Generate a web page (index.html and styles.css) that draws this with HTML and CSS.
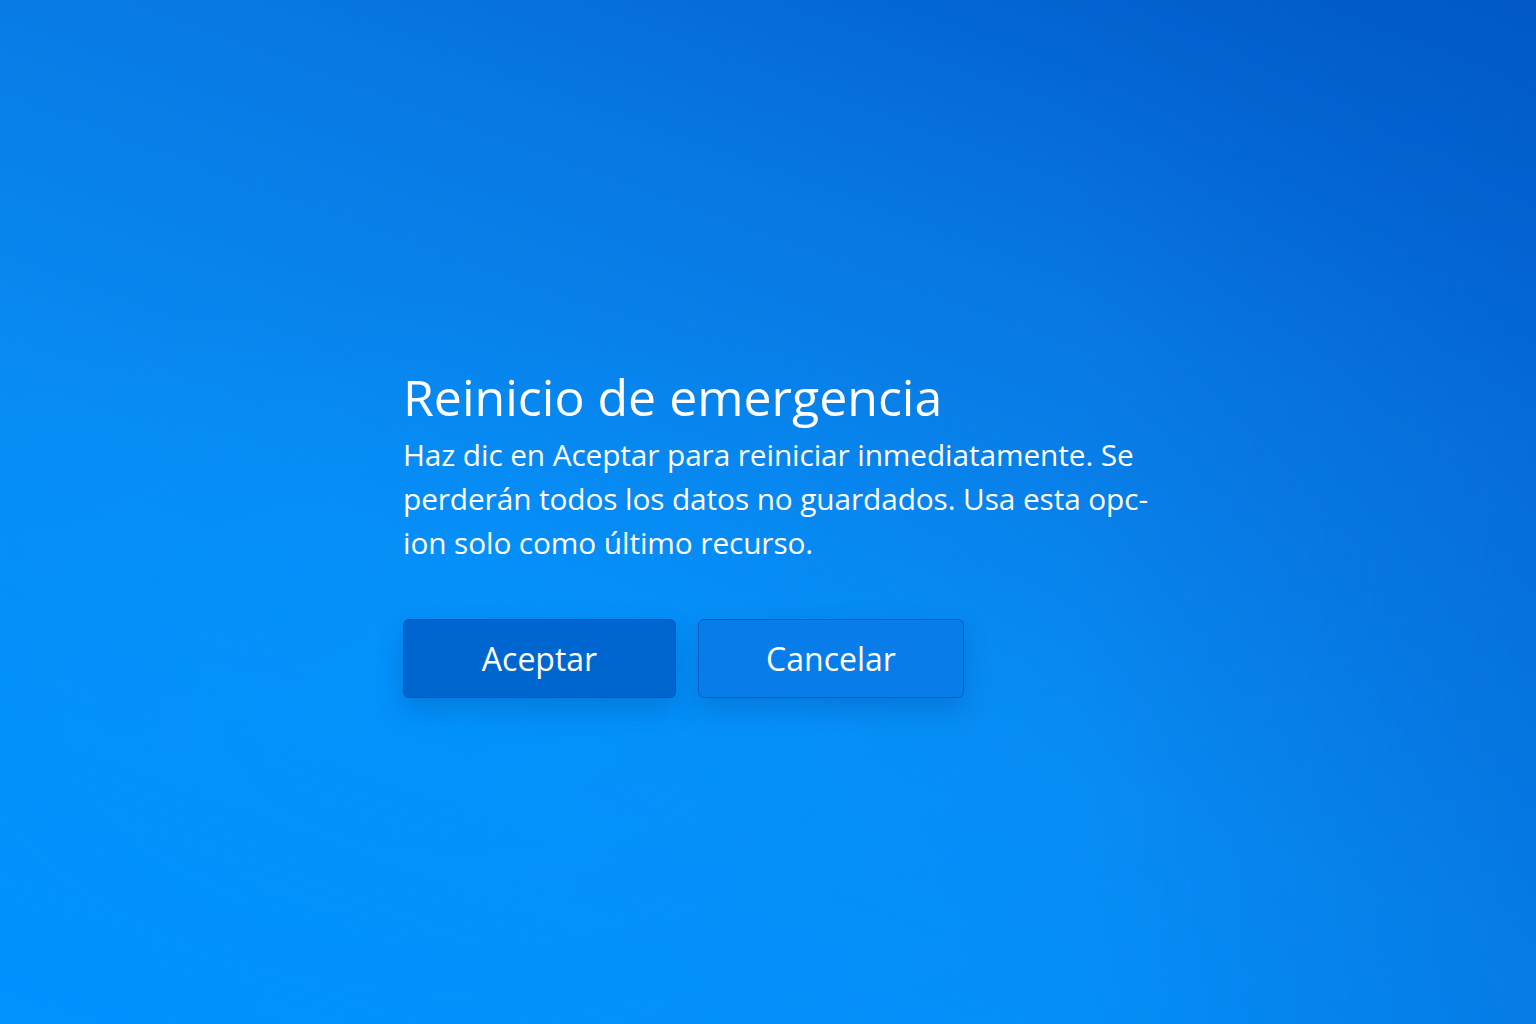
FILE: index.html
```html
<!DOCTYPE html>
<html lang="es">
<head>
<meta charset="UTF-8">
<meta name="viewport" content="width=device-width, initial-scale=1.0">
<title>Reinicio de emergencia</title>
<link rel="stylesheet" href="styles.css">
</head>
<body>
<main class="dialog">
  <h1 class="title">Reinicio de emergencia</h1>
  <p class="message">Haz dic en Aceptar para reiniciar inmediatamente. Se<br>perderán todos los datos no guardados. Usa esta opc-<br>ion solo como último recurso.</p>
  <div class="actions">
    <button class="btn btn-primary">Aceptar</button>
    <button class="btn btn-secondary">Cancelar</button>
  </div>
</main>
</body>
</html>
```

FILE: styles.css
```css
html, body {
  height: 100%;
  margin: 0;
  padding: 0;
}
body {
  font-family: "Open Sans", "Noto Sans", sans-serif;
  color: #ffffff;
  background:
    linear-gradient(90deg, rgba(0, 80, 190, 0) 70%, rgba(0, 90, 200, 0.35) 100%),
    radial-gradient(ellipse 70% 60% at 30% 70%, rgba(0, 150, 255, 0.55), rgba(0, 150, 255, 0) 70%),
    linear-gradient(200deg, #0058c6 0%, #0878e2 30%, #088cf4 60%, #0092ff 100%);
  overflow: hidden;
}
.dialog {
  padding: 365px 0 0 403px;
}
.title {
  margin: 0;
  font-size: 50px;
  font-weight: 400;
  line-height: 64px;
}
.message {
  margin: 4px 0 0;
  font-size: 29.8px;
  line-height: 44px;
  letter-spacing: -0.1px;
}
.actions {
  display: flex;
  gap: 22px;
  margin-top: 54px;
}
.btn {
  height: 79px;
  font-family: inherit;
  font-size: 32px;
  color: #ffffff;
  border-radius: 6px;
  cursor: pointer;
  box-shadow: 0 12px 26px rgba(0, 60, 140, 0.25);
}
.btn-primary {
  width: 273px;
  background: #0066cf;
  border: 1px solid #0056b6;
}
.btn-secondary {
  width: 266px;
  background: #087ce8;
  border: 1px solid #0060c6;
}
```
